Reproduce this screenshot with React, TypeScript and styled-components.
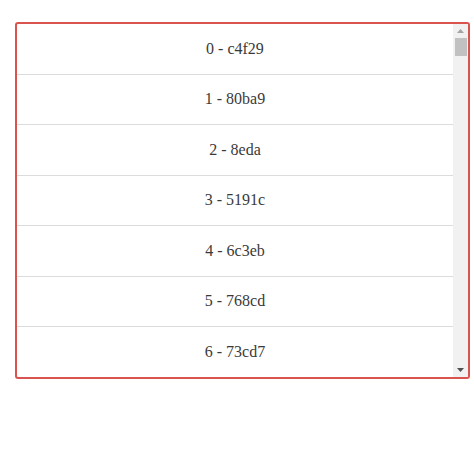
import styled, { createGlobalStyle } from 'styled-components'

const GlobalStyle = createGlobalStyle`
  html, body {
    margin: 0;
    padding: 0;
    background: #ffffff;
  }
  body {
    font-family: "Liberation Serif", "Times New Roman", serif;
  }
`

const ROW_HEIGHT = 50.5
const VIEW_HEIGHT = 353
const ARROW_HEIGHT = 14
const TOTAL = 125

const Page = styled.div`
  padding: 22px 0 0 15px;
`

const ListBox = styled.div`
  width: 451px;
  height: ${VIEW_HEIGHT}px;
  border: 2px solid #d9534f;
  border-radius: 3px;
  display: flex;
  overflow: hidden;
`

const Viewport = styled.div`
  flex: 1;
  overflow: hidden;
`

const Row = styled.div`
  height: ${ROW_HEIGHT - 1}px;
  border-bottom: 1px solid #dcdcdc;
  display: flex;
  align-items: center;
  justify-content: center;
  font-size: 16px;
  color: #3a3a3a;
`

const Scrollbar = styled.div`
  width: 15px;
  background: #f1f1f1;
  display: flex;
  flex-direction: column;
`

const ArrowButton = styled.div`
  height: ${ARROW_HEIGHT}px;
  display: flex;
  align-items: center;
  justify-content: center;
`

const Track = styled.div`
  flex: 1;
  position: relative;
`

const Thumb = styled.div`
  position: absolute;
  left: 2px;
  right: 1px;
  background: #c1c1c1;
`

const Arrow = ({ up, color }: { up?: boolean; color: string }) => (
  <svg width="7" height="4" viewBox="0 0 7 4">
    <path d={up ? 'M0 4 L3.5 0 L7 4 Z' : 'M0 0 L3.5 4 L7 0 Z'} fill={color} />
  </svg>
)

const known = ['c4f29', '80ba9', '8eda', '5191c', '6c3eb', '768cd', '73cd7']

const makeId = (i: number) => {
  if (i < known.length) return known[i]
  const h = (i * 2654435761) >>> 0
  return (h % 0xfffff).toString(16).slice(0, 5)
}

const App = () => {
  const scrollTop = 0
  const first = Math.floor(scrollTop / ROW_HEIGHT)
  const count = Math.ceil(VIEW_HEIGHT / ROW_HEIGHT)
  const visible = Array.from({ length: count }, (_, k) => first + k)

  const trackHeight = VIEW_HEIGHT - ARROW_HEIGHT * 2
  const contentHeight = TOTAL * ROW_HEIGHT
  const thumbHeight = Math.max(18, (VIEW_HEIGHT / contentHeight) * trackHeight)
  const thumbTop = (scrollTop / contentHeight) * trackHeight

  return (
    <Page>
      <GlobalStyle />
      <ListBox>
        <Viewport>
          {visible.map((i) => (
            <Row key={i}>{`${i} - ${makeId(i)}`}</Row>
          ))}
        </Viewport>
        <Scrollbar>
          <ArrowButton>
            <Arrow up color="#a3a3a3" />
          </ArrowButton>
          <Track>
            <Thumb style={{ top: thumbTop, height: thumbHeight }} />
          </Track>
          <ArrowButton>
            <Arrow color="#505050" />
          </ArrowButton>
        </Scrollbar>
      </ListBox>
    </Page>
  )
}

export default App
